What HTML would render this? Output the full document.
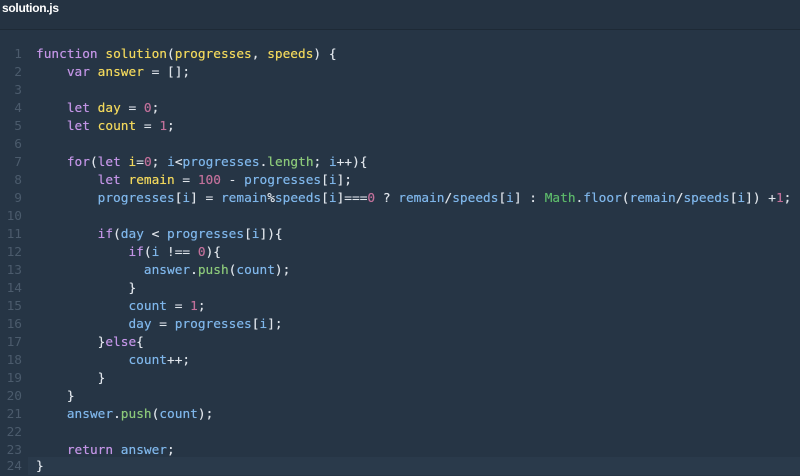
<!DOCTYPE html>
<html><head><meta charset="utf-8"><style>
html,body{margin:0;padding:0;}
body{width:800px;height:476px;background:#263545;overflow:hidden;position:relative;font-family:"DejaVu Sans Mono","Liberation Mono",monospace;}
.hdr{position:absolute;left:0;top:0;width:800px;height:29px;background:#253342;border-bottom:1px solid #1e2a36;}
.hdr span{position:absolute;left:2px;top:1px;font:bold 12px "Liberation Sans",sans-serif;color:#fff;letter-spacing:-0.3px;}
.cur{position:absolute;left:28px;top:457px;width:772px;height:18px;background:#2a3a4b;}
.l{position:absolute;left:0;height:18px;line-height:18px;font-size:12.8px;white-space:pre;color:#dfe4ea;text-shadow:0 0 0.4px currentColor;}
.n{display:inline-block;width:22px;text-align:right;color:#4b5b6c;margin-right:14px;text-shadow:none;}
.k{color:#c395e6}.f{color:#f2d85c}.v{color:#f2d85c}.b{color:#7fb6ea}.d{color:#c0709a}.g{color:#8cc97a}.m{color:#5cb86a}
</style></head><body>
<div class="hdr"><span>solution.js</span></div>
<div class="cur"></div>
<div class="l" style="top:46px"><span class="n">1</span><span class="k">function</span> <span class="f">solution</span>(<span class="v">progresses</span>, <span class="v">speeds</span>) {</div>
<div class="l" style="top:64px"><span class="n">2</span>    <span class="k">var</span> <span class="v">answer</span> = [];</div>
<div class="l" style="top:82px"><span class="n">3</span></div>
<div class="l" style="top:100px"><span class="n">4</span>    <span class="k">let</span> <span class="v">day</span> = <span class="d">0</span>;</div>
<div class="l" style="top:118px"><span class="n">5</span>    <span class="k">let</span> <span class="v">count</span> = <span class="d">1</span>;</div>
<div class="l" style="top:136px"><span class="n">6</span></div>
<div class="l" style="top:154px"><span class="n">7</span>    <span class="k">for</span>(<span class="k">let</span> <span class="v">i</span>=<span class="d">0</span>; <span class="b">i</span>&lt;<span class="b">progresses</span>.<span class="g">length</span>; <span class="b">i</span>++){</div>
<div class="l" style="top:172px"><span class="n">8</span>        <span class="k">let</span> <span class="v">remain</span> = <span class="d">100</span> - <span class="b">progresses</span>[<span class="b">i</span>];</div>
<div class="l" style="top:190px"><span class="n">9</span>        <span class="b">progresses</span>[<span class="b">i</span>] = <span class="b">remain</span>%<span class="b">speeds</span>[<span class="b">i</span>]===<span class="d">0</span> ? <span class="b">remain</span>/<span class="b">speeds</span>[<span class="b">i</span>] : <span class="m">Math</span>.<span class="b">floor</span>(<span class="b">remain</span>/<span class="b">speeds</span>[<span class="b">i</span>]) +<span class="d">1</span>;</div>
<div class="l" style="top:208px"><span class="n">10</span></div>
<div class="l" style="top:226px"><span class="n">11</span>        <span class="k">if</span>(<span class="b">day</span> &lt; <span class="b">progresses</span>[<span class="b">i</span>]){</div>
<div class="l" style="top:244px"><span class="n">12</span>            <span class="k">if</span>(<span class="b">i</span> !== <span class="d">0</span>){</div>
<div class="l" style="top:262px"><span class="n">13</span>              <span class="b">answer</span>.<span class="g">push</span>(<span class="b">count</span>);</div>
<div class="l" style="top:280px"><span class="n">14</span>            }</div>
<div class="l" style="top:298px"><span class="n">15</span>            <span class="b">count</span> = <span class="d">1</span>;</div>
<div class="l" style="top:316px"><span class="n">16</span>            <span class="b">day</span> = <span class="b">progresses</span>[<span class="b">i</span>];</div>
<div class="l" style="top:334px"><span class="n">17</span>        }<span class="k">else</span>{</div>
<div class="l" style="top:352px"><span class="n">18</span>            <span class="b">count</span>++;</div>
<div class="l" style="top:370px"><span class="n">19</span>        }</div>
<div class="l" style="top:388px"><span class="n">20</span>    }</div>
<div class="l" style="top:406px"><span class="n">21</span>    <span class="b">answer</span>.<span class="g">push</span>(<span class="b">count</span>);</div>
<div class="l" style="top:424px"><span class="n">22</span></div>
<div class="l" style="top:442px"><span class="n">23</span>    <span class="k">return</span> <span class="b">answer</span>;</div>
<div class="l" style="top:458px"><span class="n">24</span>}</div>
</body></html>
